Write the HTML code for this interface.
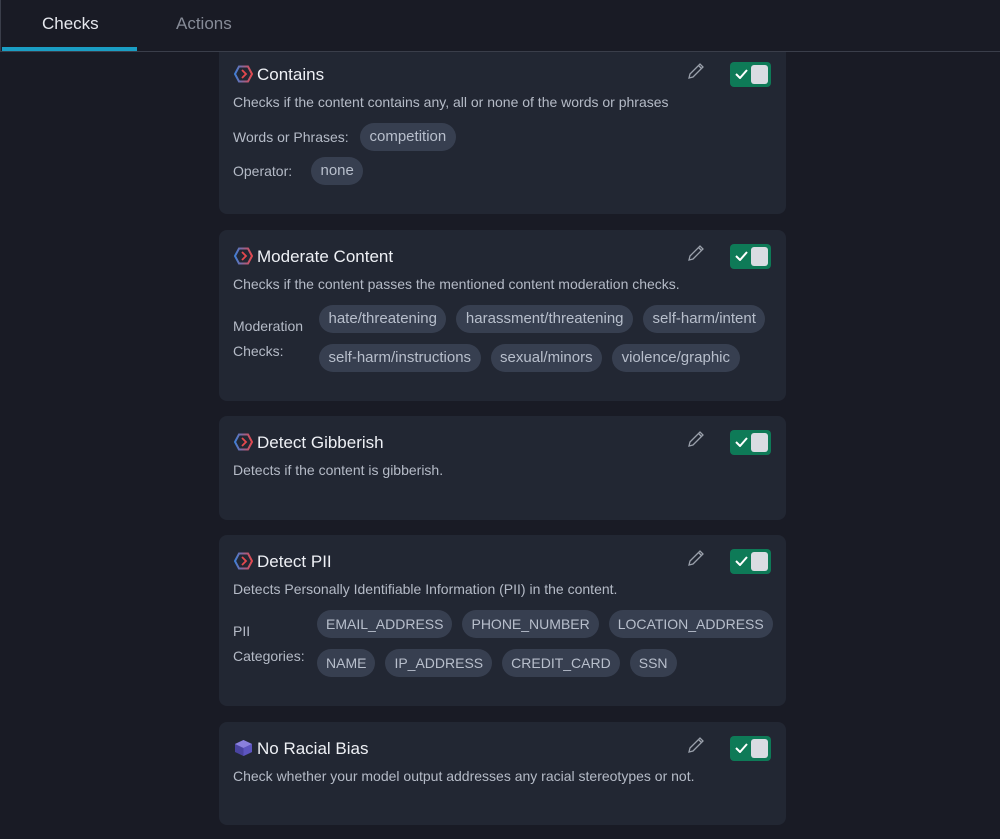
<!DOCTYPE html><html><head><style>
*{box-sizing:border-box;margin:0;padding:0}
body{width:1000px;height:839px;background:#191b25;font-family:"Liberation Sans",sans-serif;position:relative;overflow:hidden;color:#e8eaf0}
.hdr{position:absolute;left:0;top:0;width:1000px;height:52px;border-bottom:1px solid #3a3e4a;border-left:1px solid #3a3e4a;background:#191b25;z-index:2}
.tab{position:absolute;top:14px;font-size:17px}
.ul{position:absolute;left:1px;top:47px;width:135px;height:4px;background:#1a9ec4}
.card{position:absolute;left:219px;width:567px;background:#222733;border-radius:8px}
.title{position:absolute;left:38px;font-size:17px;color:#eef0f5}
.ico{position:absolute;left:15px}
.desc{position:absolute;left:14px;font-size:14px;color:#b5bbc7}
.lbl{position:absolute;left:14px;font-size:14px;color:#b5bbc7;line-height:25px}
.chips{position:absolute;display:flex;flex-wrap:wrap;gap:11px 10px}
.chip{height:28px;line-height:28px;padding:0 9px;border-radius:14px;background:#373f50;color:#b8bfcc;font-size:14px;white-space:nowrap}
.lc .chip{font-size:15px;padding:0 9.5px}
.pen{position:absolute;left:468px}
.tog{position:absolute;left:511px;width:41px;height:25px;background:#0e7a57;border-radius:4px}
.tog .k{position:absolute;right:3px;top:3px;width:17px;height:19px;background:#d9dce2;border-radius:3px}
.tog svg{position:absolute;left:5px;top:7px}
</style></head><body>
<div class="hdr"><div class="tab" style="left:41px;color:#e6e8ee">Checks</div><div class="tab" style="left:175px;color:#868b97">Actions</div><div class="ul"></div></div>

<svg width="0" height="0" style="position:absolute"><defs><linearGradient id="g" x1="0" x2="1"><stop offset="0" stop-color="#3f7fd6"/><stop offset="1" stop-color="#e5484d"/></linearGradient></defs></svg>

<div class="card" style="top:30px;height:184px">
 <svg class="ico" style="top:35px" width="19" height="18" viewBox="0 0 19 18"><path d="M5 1.5h9l4 7.5-4 7.5H5L1 9z" fill="none" stroke="url(#g)" stroke-width="2"/><path d="M8 5l4 4-4 4" fill="none" stroke="#e5484d" stroke-width="1.8"/></svg>
 <div class="title" style="top:35px">Contains</div>
 <svg class="pen" style="top:32px" width="18" height="18" viewBox="0 0 18 18"><path d="M2 16l1-4L13 2l3 3L6 15z M11.5 3.5l3 3" fill="none" stroke="#9aa0ab" stroke-width="1.3"/></svg>
 <div class="tog" style="top:32px"><svg width="13" height="10"><path d="M1 5l4 4 7-8" fill="none" stroke="#fff" stroke-width="2"/></svg><div class="k"></div></div>
 <div class="desc" style="top:64px">Checks if the content contains any, all or none of the words or phrases</div>
 <div class="lbl" style="top:95px">Words or Phrases:</div>
 <div class="chips lc" style="left:141px;top:93px"><span class="chip">competition</span></div>
 <div class="lbl" style="top:129px">Operator:</div>
 <div class="chips lc" style="left:92px;top:127px"><span class="chip">none</span></div>
</div>

<div class="card" style="top:230px;height:171px">
 <svg class="ico" style="top:17px" width="19" height="18" viewBox="0 0 19 18"><path d="M5 1.5h9l4 7.5-4 7.5H5L1 9z" fill="none" stroke="url(#g)" stroke-width="2"/><path d="M8 5l4 4-4 4" fill="none" stroke="#e5484d" stroke-width="1.8"/></svg>
 <div class="title" style="top:17px">Moderate Content</div>
 <svg class="pen" style="top:14px" width="18" height="18" viewBox="0 0 18 18"><path d="M2 16l1-4L13 2l3 3L6 15z M11.5 3.5l3 3" fill="none" stroke="#9aa0ab" stroke-width="1.3"/></svg>
 <div class="tog" style="top:14px"><svg width="13" height="10"><path d="M1 5l4 4 7-8" fill="none" stroke="#fff" stroke-width="2"/></svg><div class="k"></div></div>
 <div class="desc" style="top:46px">Checks if the content passes the mentioned content moderation checks.</div>
 <div class="lbl" style="top:84px">Moderation<br>Checks:</div>
 <div class="chips lc" style="left:100px;top:75px;width:460px"><span class="chip">hate/threatening</span><span class="chip">harassment/threatening</span><span class="chip">self-harm/intent</span><span class="chip">self-harm/instructions</span><span class="chip">sexual/minors</span><span class="chip">violence/graphic</span></div>
</div>

<div class="card" style="top:416px;height:104px">
 <svg class="ico" style="top:17px" width="19" height="18" viewBox="0 0 19 18"><path d="M5 1.5h9l4 7.5-4 7.5H5L1 9z" fill="none" stroke="url(#g)" stroke-width="2"/><path d="M8 5l4 4-4 4" fill="none" stroke="#e5484d" stroke-width="1.8"/></svg>
 <div class="title" style="top:17px">Detect Gibberish</div>
 <svg class="pen" style="top:14px" width="18" height="18" viewBox="0 0 18 18"><path d="M2 16l1-4L13 2l3 3L6 15z M11.5 3.5l3 3" fill="none" stroke="#9aa0ab" stroke-width="1.3"/></svg>
 <div class="tog" style="top:14px"><svg width="13" height="10"><path d="M1 5l4 4 7-8" fill="none" stroke="#fff" stroke-width="2"/></svg><div class="k"></div></div>
 <div class="desc" style="top:46px">Detects if the content is gibberish.</div>
</div>

<div class="card" style="top:535px;height:171px">
 <svg class="ico" style="top:17px" width="19" height="18" viewBox="0 0 19 18"><path d="M5 1.5h9l4 7.5-4 7.5H5L1 9z" fill="none" stroke="url(#g)" stroke-width="2"/><path d="M8 5l4 4-4 4" fill="none" stroke="#e5484d" stroke-width="1.8"/></svg>
 <div class="title" style="top:17px">Detect PII</div>
 <svg class="pen" style="top:14px" width="18" height="18" viewBox="0 0 18 18"><path d="M2 16l1-4L13 2l3 3L6 15z M11.5 3.5l3 3" fill="none" stroke="#9aa0ab" stroke-width="1.3"/></svg>
 <div class="tog" style="top:14px"><svg width="13" height="10"><path d="M1 5l4 4 7-8" fill="none" stroke="#fff" stroke-width="2"/></svg><div class="k"></div></div>
 <div class="desc" style="top:46px">Detects Personally Identifiable Information (PII) in the content.</div>
 <div class="lbl" style="top:84px">PII<br>Categories:</div>
 <div class="chips" style="left:98px;top:75px;width:465px"><span class="chip">EMAIL_ADDRESS</span><span class="chip">PHONE_NUMBER</span><span class="chip">LOCATION_ADDRESS</span><span class="chip">NAME</span><span class="chip">IP_ADDRESS</span><span class="chip">CREDIT_CARD</span><span class="chip">SSN</span></div>
</div>

<div class="card" style="top:722px;height:103px">
 <svg class="ico" style="top:17px" width="19" height="18" viewBox="0 0 19 18"><path d="M9.5 1L18 5v8l-8.5 4L1 13V5z" fill="#4a44a0"/><path d="M1 5l8.5 4L18 5 9.5 1z" fill="#8a80dd"/><path d="M9.5 9v8L18 13V5z" fill="#5d55c0"/></svg>
 <div class="title" style="top:17px">No Racial Bias</div>
 <svg class="pen" style="top:14px" width="18" height="18" viewBox="0 0 18 18"><path d="M2 16l1-4L13 2l3 3L6 15z M11.5 3.5l3 3" fill="none" stroke="#9aa0ab" stroke-width="1.3"/></svg>
 <div class="tog" style="top:14px"><svg width="13" height="10"><path d="M1 5l4 4 7-8" fill="none" stroke="#fff" stroke-width="2"/></svg><div class="k"></div></div>
 <div class="desc" style="top:46px">Check whether your model output addresses any racial stereotypes or not.</div>
</div>
</body></html>
